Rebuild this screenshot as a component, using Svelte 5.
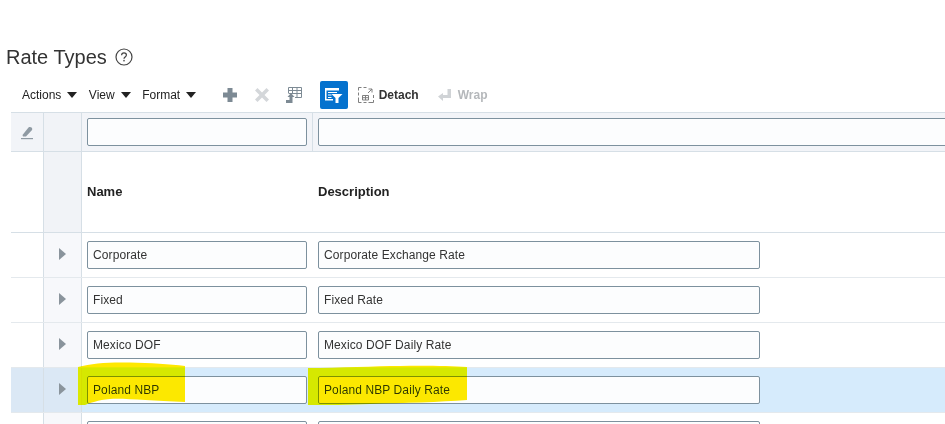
<script>
	const rows = [
		{ name: 'Corporate', description: 'Corporate Exchange Rate' },
		{ name: 'Fixed', description: 'Fixed Rate' },
		{ name: 'Mexico DOF', description: 'Mexico DOF Daily Rate' },
		{ name: 'Poland NBP', description: 'Poland NBP Daily Rate', selected: true },
		{ name: '', description: '' }
	];
	const menus = ['Actions', 'View', 'Format'];
</script>

<main>
	<div class="title">
		<h1>Rate Types</h1>
		<svg width="18" height="18" viewBox="0 0 18 18">
			<circle cx="9" cy="9" r="8" fill="none" stroke="#444" stroke-width="1.2" />
			<path d="M6.6 7.2c0-1.500 1.100-2.300 2.400-2.300s2.400.8 2.400 2.100c0 1.900-2.400 1.900-2.400 3.700" fill="none" stroke="#444" stroke-width="1.2" />
			<rect x="8.300" y="11.900" width="1.400" height="1.500" fill="#444" />
		</svg>
	</div>

	<div class="toolbar">
		{#each menus as menu}
			<span class="menu">{menu}<i class="caret"></i></span>
		{/each}
		<svg class="add" width="16" height="16" viewBox="0 0 16 16"><path d="M5.500 1h5v4.500H15v5h-4.500V15h-5v-4.500H1v-5h4.500z" fill="#7d8a94" /></svg>
		<svg class="del" width="16" height="16" viewBox="0 0 16 16"><path d="M3.500 1L8 5.500 12.500 1 15 3.500 10.500 8l4.500 4.500-2.500 2.500L8 10.500 3.500 15 1 12.500 5.500 8 1 3.500z" fill="#d4d7da" /></svg>
		<svg class="dup" width="16" height="18" viewBox="0 0 16 18">
			<path d="M2.500 7V1.500h13v10H9M2.500 4.500h13M2.500 7.500h13M6.500 1.500v6M11 1.500v10" fill="none" stroke="#7d8a94" />
			<path d="M0 17v-3h3.500v-3H1.500L5 7l3.500 4H6.500v6z" fill="#7d8a94" />
		</svg>
		<span class="filter">
			<svg width="18" height="15" viewBox="0 0 18 15">
				<path d="M0 0h14v2.500H0zM0 2.500h1.500V12H0zM3 4h9v1H3zM3 6.500h3.500v1H3zM3 9h3.500v1H3zM0 11h8v1.500H0z" fill="#fff" />
				<path d="M6.500 6h11l-4 4v5h-3v-5z" fill="#fff" />
			</svg>
		</span>
		<svg class="detach" width="16" height="16" viewBox="0 0 16 16">
			<path d="M.5 3.500v-3h3M5.500.5h3M.5 5.500v3M.5 10.500v2.500M.5 13v2.500h3M5.500 15.500h3M10.500 15.500h2.500M13 15.500h2.500V13M15.500 11V8" fill="none" stroke="#808080" />
			<path d="M10.500 2h3.500v3.500M14 2l-4 4" fill="none" stroke="#808080" />
			<path d="M4.500 8.500h6v4.500h-6zM4.500 10.700h6M7.500 8.500v4.500" fill="none" stroke="#808080" />
		</svg>
		<span class="btn">Detach</span>
		<svg class="wrap" width="15" height="14" viewBox="0 0 15 14"><path d="M10.500 1h3.500v9H6v3L1 8.500 6 5v2h4.500z" fill="#d0d3d6" /></svg>
		<span class="btn off">Wrap</span>
	</div>

	<section class="grid">
		<div class="row filters">
			<div class="c-edit">
				<svg width="14" height="15" viewBox="0 0 14 15">
					<path d="M2.500 10l6-7.500c1-.8 2.500-.5 3.300.3.600.9.600 1.700 0 2.500L6 11.500H3z" fill="#8f9aa3" />
					<rect x="1" y="13" width="12" height="1.200" fill="#8f9aa3" />
				</svg>
			</div>
			<div class="c-arrow"></div>
			<div class="c-data">
				<span class="field name"></span>
				<span class="divider"></span>
				<span class="field wide"></span>
			</div>
		</div>

		<div class="row head">
			<div class="c-edit plain"></div>
			<div class="c-arrow"></div>
			<div class="c-data">
				<span class="label name">Name</span>
				<span class="label">Description</span>
			</div>
		</div>

		{#each rows as row}
			<div class="row item" class:selected={row.selected}>
				<div class="c-edit plain"></div>
				<div class="c-arrow">
					{#if row.name}<i class="expand"></i>{/if}
				</div>
				<div class="c-data">
					<span class="field name">{row.name}</span>
					<span class="field desc">{row.description}</span>
				</div>
			</div>
		{/each}
	</section>

	<!-- marker strokes drawn over the selected row -->
	<svg class="marker" width="945" height="424" viewBox="0 0 945 424">
		<path d="M78 367C92 363 110 362 130 362.500C150 363 170 364 185 366V402C150 401 125 398 110 399C98 400 90 403 85 405H78z" fill="#ffe800" />
		<path d="M308 368C340 368 375 366 400 366C425 365.500 450 366 467 367V400C440 402 405 403 370 404C350 405 325 405 308 405z" fill="#ffe800" />
	</svg>
</main>

<style>
	:global(body) {
		background: #fff;
		overflow: hidden;
	}

	main {
		position: relative;
		width: 945px;
		height: 424px;
		overflow: hidden;
		font-family: "Liberation Sans", Arial, sans-serif;
		color: #333;
	}

	.title {
		display: flex;
		align-items: center;
		gap: 8px;
		height: 24px;
		padding: 45px 0 0 6px;
	}

	h1 {
		margin: 0;
		font-size: 20px;
		font-weight: 400;
		line-height: 24px;
		color: #333;
	}

	.toolbar {
		display: flex;
		align-items: center;
		height: 28px;
		margin-top: 12px;
		padding-left: 22px;
		font-size: 12px;
		color: #222;
	}

	.menu {
		display: flex;
		align-items: center;
		margin-right: 11.5px;
	}

	.caret {
		width: 0;
		height: 0;
		margin-left: 6px;
		border-left: 5px solid transparent;
		border-right: 5px solid transparent;
		border-top: 6px solid #222;
	}

	.add { margin-left: 14px; }
	.del { margin-left: 16px; }
	.dup { margin-left: 16px; }

	.filter {
		display: flex;
		align-items: center;
		justify-content: center;
		width: 28px;
		height: 28px;
		margin-left: 18px;
		background: #0572ce;
		border-radius: 2px;
	}

	.detach { margin-left: 10px; }

	.btn {
		margin-left: 5px;
		font-weight: 700;
		color: #333;
	}

	.off { color: #b5b8bb; margin-left: 6px; }
	.wrap { margin-left: 18px; }

	.grid {
		margin: 3px 0 0 11px;
	}

	.row {
		display: flex;
		border-bottom: 1px solid #e4e9ed;
	}

	.filters {
		height: 38px;
		background: #f2f4f8;
		border-top: 1px solid #d6dfe6;
		border-bottom: 1px solid #d6dfe6;
	}

	.head {
		height: 80px;
		border-bottom: 1px solid #d6dfe6;
	}

	.head .c-data {
		padding-bottom: 2px;
	}

	.item {
		height: 44px;
	}

	.c-edit {
		display: flex;
		align-items: center;
		justify-content: center;
		width: 32px;
		background: #f2f4f8;
		border-right: 1px solid #d6dfe6;
	}

	.plain { background: transparent; }

	.c-arrow {
		display: flex;
		align-items: center;
		justify-content: center;
		width: 37px;
		background: #f1f3f7;
		border-right: 1px solid #d6dfe6;
	}

	.item .c-arrow { background: #f7f8fb; }

	.c-data {
		display: flex;
		flex: 1;
		align-items: center;
		padding-left: 5px;
		min-width: 0;
	}

	.field {
		box-sizing: border-box;
		flex: none;
		height: 28px;
		padding-left: 5px;
		line-height: 26px;
		font-size: 12px;
		letter-spacing: 0.1px;
		color: #333;
		background: #fcfdfe;
		border: 1px solid #7d919e;
		border-radius: 2px;
	}

	.name { width: 220px; margin-right: 11px; }
	.desc { width: 442px; }
	.wide { width: 640px; }

	.filters .name { margin-right: 5px; }

	.divider {
		flex: none;
		align-self: stretch;
		width: 1px;
		margin-right: 5px;
		background: #d6dfe6;
	}

	.label {
		font-size: 13px;
		font-weight: 700;
		color: #222;
	}

	.expand {
		width: 0;
		height: 0;
		margin-bottom: 2px;
		border-top: 6px solid transparent;
		border-bottom: 6px solid transparent;
		border-left: 7px solid #8a949c;
	}

	.selected { background: #d6ebfc; }
	.selected .c-edit { background: #dbe8f5; }
	.selected .c-arrow { background: #dbe8f5; }

	.marker {
		position: absolute;
		left: 0;
		top: 0;
		mix-blend-mode: darken;
		pointer-events: none;
	}
</style>
